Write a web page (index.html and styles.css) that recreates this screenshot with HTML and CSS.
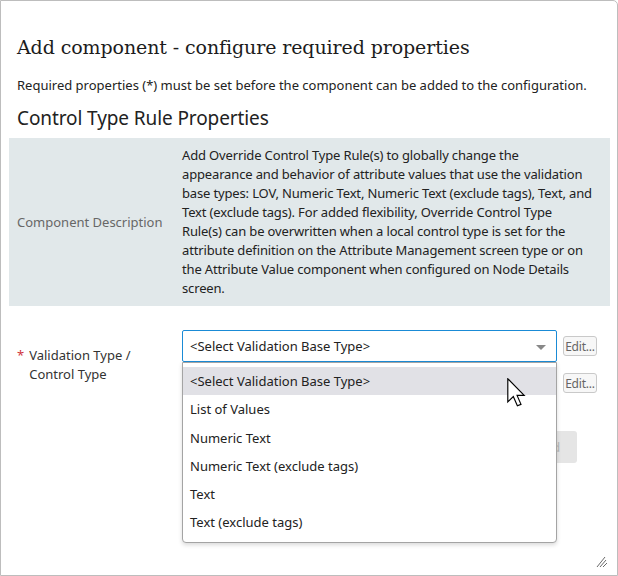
FILE: index.html
```html
<!DOCTYPE html>
<html lang="en">
<head>
<meta charset="utf-8">
<title>Add component</title>
<link rel="stylesheet" href="styles.css">
</head>
<body>
<div class="dialog">
  <div class="content">
    <h1 class="title">Add component - configure required properties</h1>
    <p class="intro">Required properties (*) must be set before the component can be added to the configuration.</p>
    <h2 class="section">Control Type Rule Properties</h2>
    <div class="desc">
      <div class="desc-label">Component Description</div>
      <div class="desc-text">Add Override Control Type Rule(s) to globally change the<br>appearance and behavior of attribute values that use the validation<br>base types: LOV, Numeric Text, Numeric Text (exclude tags), Text, and<br>Text (exclude tags). For added flexibility, Override Control Type<br>Rule(s) can be overwritten when a local control type is set for the<br>attribute definition on the Attribute Management screen type or on<br>the Attribute Value component when configured on Node Details<br>screen.</div>
    </div>
    <div class="field">
      <div class="field-label"><span class="req">*</span><span>Validation Type /<br>Control Type</span></div>
      <div class="field-controls">
        <div class="row">
          <div class="select">
            <span class="select-value">&lt;Select Validation Base Type&gt;</span>
            <span class="arrow"></span>
          </div>
          <button class="edit">Edit...</button>
        </div>
        <div class="row">
          <div class="select ghost"></div>
          <button class="edit">Edit...</button>
        </div>
        <div class="row actions">
          <button class="add" disabled>Add</button>
        </div>
        <ul class="dropdown">
          <li class="active">&lt;Select Validation Base Type&gt;</li>
          <li>List of Values</li>
          <li>Numeric Text</li>
          <li>Numeric Text (exclude tags)</li>
          <li>Text</li>
          <li>Text (exclude tags)</li>
        </ul>
        <svg class="cursor" width="19" height="29" viewBox="0 0 13 20">
          <path d="M0.5 0.5 L0.5 16.5 L4.3 12.8 L7.1 19.2 L9.6 18.2 L6.9 12 L11.8 12 Z" fill="#fff" stroke="#000" stroke-width="0.8" stroke-linejoin="miter"/>
        </svg>
      </div>
    </div>
  </div>
  <svg class="grip" width="12" height="13" viewBox="0 0 12 13">
    <path d="M1 12 L9 2 M4 12 L10 5 M7 12 L11 8" stroke="#6a6a6a" stroke-width="1"/>
  </svg>
</div>
</body>
</html>
```

FILE: styles.css
```css
html, body {
  margin: 0;
  padding: 0;
  background: #fff;
}

body {
  font-family: "Noto Sans", "Open Sans", sans-serif;
  font-size: 13px;
  color: #222;
}

.dialog {
  position: relative;
  box-sizing: border-box;
  width: 618px;
  height: 576px;
  border: 1px solid #bdbdbd;
  border-radius: 0 5px 0 0;
  background: #fff;
  overflow: hidden;
}

.content {
  padding: 0 7px 0 8px;
}

.title {
  margin: 34px 0 0 8px;
  font-family: "DejaVu Serif", serif;
  font-weight: normal;
  font-size: 19px;
  line-height: 24px;
  color: #1c1c1c;
  letter-spacing: -0.1px;
}

.intro {
  margin: 16px 0 0 8px;
  line-height: 20px;
}

.section {
  margin: 11px 0 0 8px;
  font-weight: normal;
  font-size: 19px;
  line-height: 24px;
  color: #222;
  letter-spacing: -0.1px;
}

.desc {
  margin-top: 8px;
  display: grid;
  grid-template-columns: 165px 1fr;
  align-items: center;
  padding: 8px 4px 8px 8px;
  background: #e1e8ea;
  line-height: 19px;
}

.desc-label {
  color: #676767;
}

.desc-text {
  white-space: nowrap;
  letter-spacing: -0.15px;
}

.field {
  display: flex;
  margin-top: 24px;
  padding-left: 8px;
}

.field-label {
  width: 165px;
  display: flex;
  gap: 5px;
  padding-top: 16px;
  line-height: 19px;
  color: #333;
}

.req {
  color: #d0343d;
}

.field-controls {
  position: relative;
  display: flex;
  flex-direction: column;
  gap: 5px;
}

.row {
  display: flex;
  align-items: center;
  gap: 6px;
}

.select {
  box-sizing: border-box;
  width: 375px;
  height: 32px;
  border: 1px solid #1a8bd6;
  border-radius: 2px;
  display: flex;
  align-items: center;
  justify-content: space-between;
  padding: 0 10px 0 7px;
}

.select.ghost {
  border-color: #cfcfcf;
}

.arrow {
  width: 0;
  height: 0;
  border-left: 5px solid transparent;
  border-right: 5px solid transparent;
  border-top: 5px solid #888;
  margin-top: 2px;
}

.edit {
  box-sizing: border-box;
  width: 34px;
  height: 20px;
  padding: 0;
  border: 1px solid #c9c9c9;
  border-radius: 3px;
  background: #f7f7f7;
  font-family: inherit;
  font-size: 12px;
  color: #666;
  letter-spacing: -0.2px;
}

.actions {
  margin-top: 27px;
  padding-left: 337px;
}

.add {
  box-sizing: border-box;
  width: 58px;
  height: 32px;
  border: none;
  border-radius: 3px;
  background: #e5e5e5;
  font-family: inherit;
  font-size: 13px;
  color: #b8b8b8;
}

.dropdown {
  position: absolute;
  left: 0;
  top: 32px;
  box-sizing: border-box;
  width: 375px;
  margin: 0;
  padding: 4px 0 5px;
  list-style: none;
  background: #fff;
  border: 1px solid #a4a4a4;
  border-radius: 0 0 4px 4px;
  box-shadow: 0 2px 4px rgba(0, 0, 0, 0.15);
}

.dropdown li {
  height: 28.3px;
  line-height: 28px;
  padding-left: 7px;
  color: #222;
}

.dropdown li.active {
  background: #e1e1e6;
}

.cursor {
  position: absolute;
  left: 325px;
  top: 48px;
}

.grip {
  position: absolute;
  right: 9px;
  bottom: 7px;
}
```
